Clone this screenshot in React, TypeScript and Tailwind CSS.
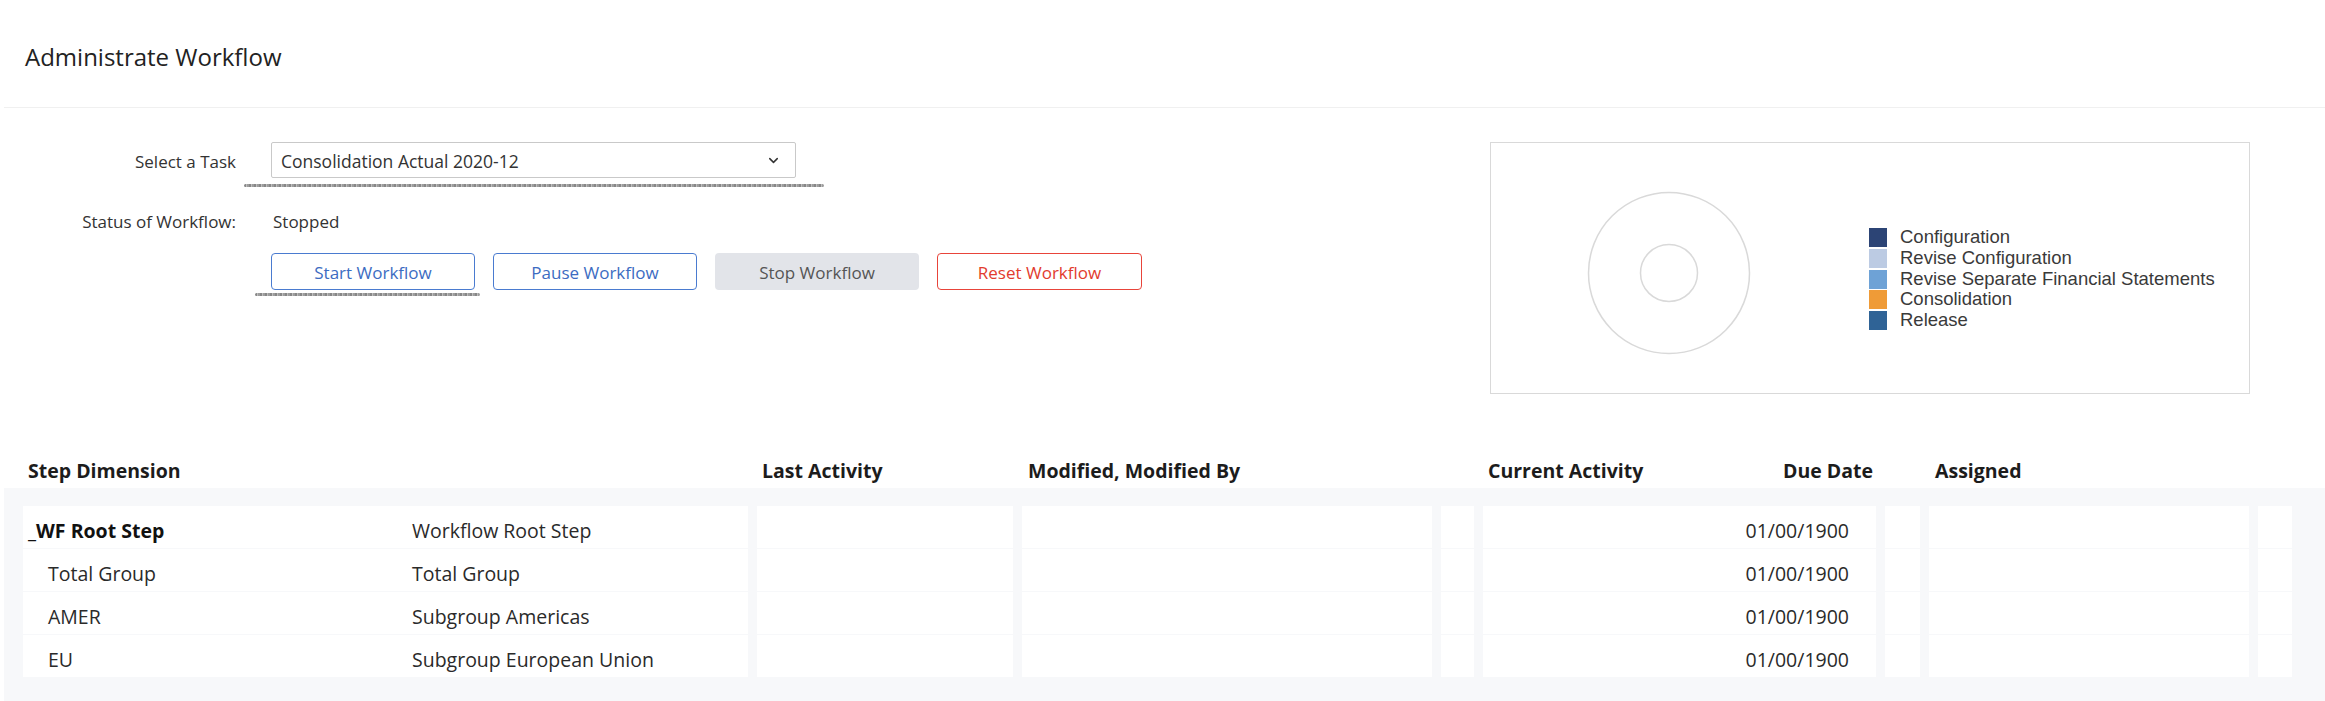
import { ChevronDown } from 'lucide-react';

const legend = [
  { label: 'Configuration', color: 'bg-[#2c4475]' },
  { label: 'Revise Configuration', color: 'bg-[#bccbe3]' },
  { label: 'Revise Separate Financial Statements', color: 'bg-[#6ea2d6]' },
  { label: 'Consolidation', color: 'bg-[#ef9b37]' },
  { label: 'Release', color: 'bg-[#2f6396]' },
];

const rows = [
  { step: '_WF Root Step', desc: 'Workflow Root Step', root: true },
  { step: 'Total Group', desc: 'Total Group', root: false },
  { step: 'AMER', desc: 'Subgroup Americas', root: false },
  { step: 'EU', desc: 'Subgroup European Union', root: false },
];

const cols = 'grid grid-cols-[725px_256px_410px_33px_393px_35px_320px_34px] gap-x-[9px]';

function Smudge({ className }: { className: string }) {
  // blurred scribble left under some controls in the capture
  return (
    <div
      className={`h-[3px] rounded-full bg-[repeating-linear-gradient(90deg,#5f5f5f_0_2px,#a9a9a9_2px_3px,#7d7d7d_3px_5px)] opacity-75 blur-[0.6px] ${className}`}
    />
  );
}

function Donut() {
  return (
    <svg width="164" height="164" viewBox="0 0 164 164" className="shrink-0">
      <circle cx="82" cy="82" r="80.5" fill="none" stroke="#d9d9d9" strokeWidth="1.5" />
      <circle cx="82" cy="82" r="28.5" fill="none" stroke="#d9d9d9" strokeWidth="1.5" />
    </svg>
  );
}

export default function App() {
  return (
    <div className="min-h-screen bg-white font-['Open_Sans',sans-serif] text-[#333]">
      <header className="ml-[4px] flex h-[108px] items-center border-b border-[#f0f0f0] pl-[21px] pt-[6px]">
        <h1 className="text-[24px] font-normal text-[#222]">Administrate Workflow</h1>
      </header>

      <section className="flex pt-[34px]">
        <div className="flex-1">
          <div className="flex h-[36px] items-center">
            <label className="w-[236px] pt-[4px] text-right text-[17px]">Select a Task</label>
            <div className="ml-[35px] flex h-[36px] w-[525px] items-center justify-between rounded-[2px] border border-[#c9c9c9] pl-[9px] pr-[14px] text-[17.5px]">
              <span className="pt-[3px]">Consolidation Actual 2020-12</span>
              <ChevronDown size={15} strokeWidth={2.4} className="text-[#333]" />
            </div>
          </div>
          <Smudge className="ml-[244px] mt-[6px] w-[580px]" />

          <div className="mt-[22px] flex h-[26px] items-center text-[17px]">
            <span className="w-[236px] text-right">Status of Workflow:</span>
            <span className="ml-[37px]">Stopped</span>
          </div>

          <div className="ml-[271px] mt-[18px] flex gap-[18px] text-[17px]">
            <button className="h-[37px] w-[204px] rounded-[4px] border border-[#4a7bd0] bg-white pt-[3px] text-[#3c6cc2]">
              Start Workflow
            </button>
            <button className="h-[37px] w-[204px] rounded-[4px] border border-[#4a7bd0] bg-white pt-[3px] text-[#3c6cc2]">
              Pause Workflow
            </button>
            <button className="h-[37px] w-[204px] rounded-[4px] bg-[#e2e4e9] pt-[3px] text-[#555]">
              Stop Workflow
            </button>
            <button className="h-[37px] w-[205px] rounded-[4px] border border-[#e8443a] bg-white pt-[3px] text-[#e23b2e]">
              Reset Workflow
            </button>
          </div>
          <Smudge className="ml-[255px] mt-[3px] w-[225px]" />
        </div>

        <div className="mr-[75px] flex h-[252px] w-[760px] items-center border border-[#d9d9d9] pl-[96px] pt-[10px]">
          <Donut />
          <div className="ml-[118px] mt-[12px] flex flex-col font-['Liberation_Sans',Arial,sans-serif] text-[18.5px] text-[#3a3a3a]">
            {legend.map((l) => (
              <div key={l.label} className="flex h-[20.7px] items-center">
                <span className={`h-[19px] w-[18px] ${l.color}`} />
                <span className="ml-[13px] leading-none">{l.label}</span>
              </div>
            ))}
          </div>
        </div>
      </section>

      <section className="ml-[4px] mt-[58px]">
        <div className={`${cols} h-[36px] items-center pl-[19px] pt-[2px] text-[19.5px] font-bold text-[#1c1c1c]`}>
          <div className="pl-[5px]">Step Dimension</div>
          <div className="pl-[5px]">Last Activity</div>
          <div className="pl-[6px]">Modified, Modified By</div>
          <div />
          <div className="flex justify-between pl-[5px] pr-[3px]">
            <span>Current Activity</span>
            <span>Due Date</span>
          </div>
          <div />
          <div className="pl-[6px]">Assigned</div>
          <div />
        </div>

        <div className="flex flex-col gap-y-[1px] bg-[#f7f8fa] pb-[30px] pl-[19px] pt-[18px] text-[19.5px] text-[#2a2a2a]">
          {rows.map((r) => (
            <div key={r.step} className={`${cols} h-[42px]`}>
              <div className="flex items-center bg-white pl-[5px] pt-[8px]">
                <span className={`w-[384px] ${r.root ? 'font-bold text-[#111]' : 'pl-[20px]'}`}>{r.step}</span>
                <span>{r.desc}</span>
              </div>
              <div className="bg-white" />
              <div className="bg-white" />
              <div className="bg-white" />
              <div className="flex items-center justify-end bg-white pr-[27px] pt-[8px]">01/00/1900</div>
              <div className="bg-white" />
              <div className="bg-white" />
              <div className="bg-white" />
            </div>
          ))}
        </div>
      </section>
    </div>
  );
}
